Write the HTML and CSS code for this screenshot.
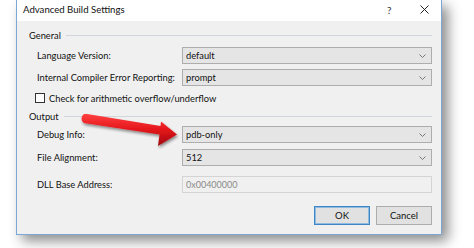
FILE: index.html
```html
<!DOCTYPE html>
<html lang="en">
  <head>
    <meta charset="UTF-8" />
    <title>Advanced Build Settings</title>
    <link rel="stylesheet" href="styles.css">
  </head>
  <body>
    <div class="dialog">
      <div class="titlebar">
        <span class="title">Advanced Build Settings</span>
        <span class="help">?</span>
        <svg class="close" width="9" height="9" viewBox="0 0 9 9">
          <path d="M0.5 0.5 L8.5 8.5 M8.5 0.5 L0.5 8.5" stroke="#222" stroke-width="1" fill="none" />
        </svg>
      </div>

      <div class="content">
        <div class="group-head"><span>General</span><div class="rule"></div></div>

        <div class="row first">
          <label>Language Version:</label>
          <div class="select">default<svg class="chev" width="7" height="4" viewBox="0 0 7 4"><path d="M0.5 0.5 L3.5 3.5 L6.5 0.5" stroke="#777" fill="none"/></svg></div>
        </div>
        <div class="row">
          <label>Internal Compiler Error Reporting:</label>
          <div class="select">prompt<svg class="chev" width="7" height="4" viewBox="0 0 7 4"><path d="M0.5 0.5 L3.5 3.5 L6.5 0.5" stroke="#777" fill="none"/></svg></div>
        </div>

        <div class="check-row">
          <span class="box"></span>
          <span>Check for arithmetic overflow/underflow</span>
        </div>

        <div class="group-head output"><span>Output</span><div class="rule"></div></div>

        <div class="row debug">
          <label>Debug Info:</label>
          <div class="select">pdb-only<svg class="chev" width="7" height="4" viewBox="0 0 7 4"><path d="M0.5 0.5 L3.5 3.5 L6.5 0.5" stroke="#777" fill="none"/></svg></div>
        </div>
        <div class="row align">
          <label>File Alignment:</label>
          <div class="select">512<svg class="chev" width="7" height="4" viewBox="0 0 7 4"><path d="M0.5 0.5 L3.5 3.5 L6.5 0.5" stroke="#777" fill="none"/></svg></div>
        </div>
        <div class="row dll">
          <label>DLL Base Address:</label>
          <div class="textbox">0x00400000</div>
        </div>

        <div class="buttons">
          <button class="btn default">OK</button>
          <button class="btn">Cancel</button>
        </div>
      </div>
    </div>

    <!-- red callout arrow drawn over the dialog -->
    <svg class="arrow" width="474" height="248" viewBox="0 0 474 248">
      <defs>
        <linearGradient id="red" x1="0" y1="0" x2="0" y2="1">
          <stop offset="0" stop-color="#ff4040" />
          <stop offset="0.5" stop-color="#e3141a" />
          <stop offset="1" stop-color="#a00b0e" />
        </linearGradient>
        <filter id="drop" x="-20%" y="-40%" width="140%" height="180%">
          <feGaussianBlur in="SourceAlpha" stdDeviation="1.6" />
          <feOffset dx="1" dy="2" />
          <feComponentTransfer><feFuncA type="linear" slope="0.45" /></feComponentTransfer>
          <feMerge><feMergeNode /><feMergeNode in="SourceGraphic" /></feMerge>
        </filter>
      </defs>
      <path filter="url(#drop)" fill="url(#red)"
        d="M84 114 Q80.5 116.5 82 121 Q83.5 123.5 87 123.5 L159.5 134.5 L158 146 L177 134.5 L161 121.5 L160.5 126 L87 114 Z" />
    </svg>
  </body>
</html>
```

FILE: styles.css
```css
* {
  margin: 0;
  padding: 0;
  box-sizing: border-box;
}

body {
  position: relative;
  width: 474px;
  height: 248px;
  background: #ffffff;
  font-family: Lato, 'Open Sans', sans-serif;
  font-size: 9.3px;
  color: #111;
  overflow: hidden;
}

.dialog {
  width: 426px;
  height: 235px;
  margin-left: 16px;
  background: #f0f0f0;
  border: 1px solid #7aa7d6;
  border-top: none;
  box-shadow: 6px 6px 12px rgba(0,0,0,0.45);
}

.titlebar {
  display: flex;
  align-items: center;
  height: 21px;
  padding-left: 6px;
  padding-bottom: 2px;
  background: #ffffff;
}

.title {
  flex: 1;
  font-size: 9.6px;
}

.help {
  width: 10px;
  margin-right: 23px;
  font-size: 10px;
  color: #333;
}

.close {
  margin-right: 12px;
}

.content {
  padding: 7px 9px 0 12px;
}

.group-head {
  display: flex;
  align-items: center;
  height: 14px;
}

.group-head span {
  margin-right: 5px;
}

.group-head .rule {
  flex: 1;
  height: 1px;
  background: #d0d6dc;
}

.group-head.output {
  margin-top: 4px;
}

.row {
  display: flex;
  align-items: center;
  height: 17px;
  margin-top: 5px;
}

.row label {
  flex-shrink: 0;
  width: 153px;
  padding-left: 8px;
  white-space: nowrap;
}

.row.debug {
  margin-top: 3px;
}

.row.align {
  margin-top: 6px;
}

.row.dll {
  margin-top: 10px;
}

.select, .textbox {
  flex: 1;
  display: flex;
  align-items: center;
  height: 17px;
  padding-left: 3px;
  border: 1px solid #adadad;
  background: #e5e5e5;
}

.select .chev {
  margin-left: auto;
  margin-right: 5px;
}

.textbox {
  border-color: #d4d4d4;
  background: #f0f0f0;
  color: #8a8a8a;
  font-size: 9px;
}

.check-row {
  display: flex;
  align-items: center;
  height: 14px;
  margin-top: 5px;
  padding-left: 6px;
}

.box {
  width: 10px;
  height: 10px;
  margin-right: 4px;
  border: 1px solid #333;
  background: #fff;
}

.buttons {
  display: flex;
  justify-content: flex-end;
  gap: 6px;
  margin-top: 13px;
}

.btn {
  width: 56px;
  height: 19px;
  font-family: inherit;
  font-size: 9.5px;
  color: #111;
  background: #e1e1e1;
  border: 1px solid #adadad;
}

.btn.default {
  border-color: #3f86c8;
  box-shadow: inset 0 0 0 1px #8fbbe3;
}

.arrow {
  position: absolute;
  left: 0;
  top: 0;
  pointer-events: none;
}
```
